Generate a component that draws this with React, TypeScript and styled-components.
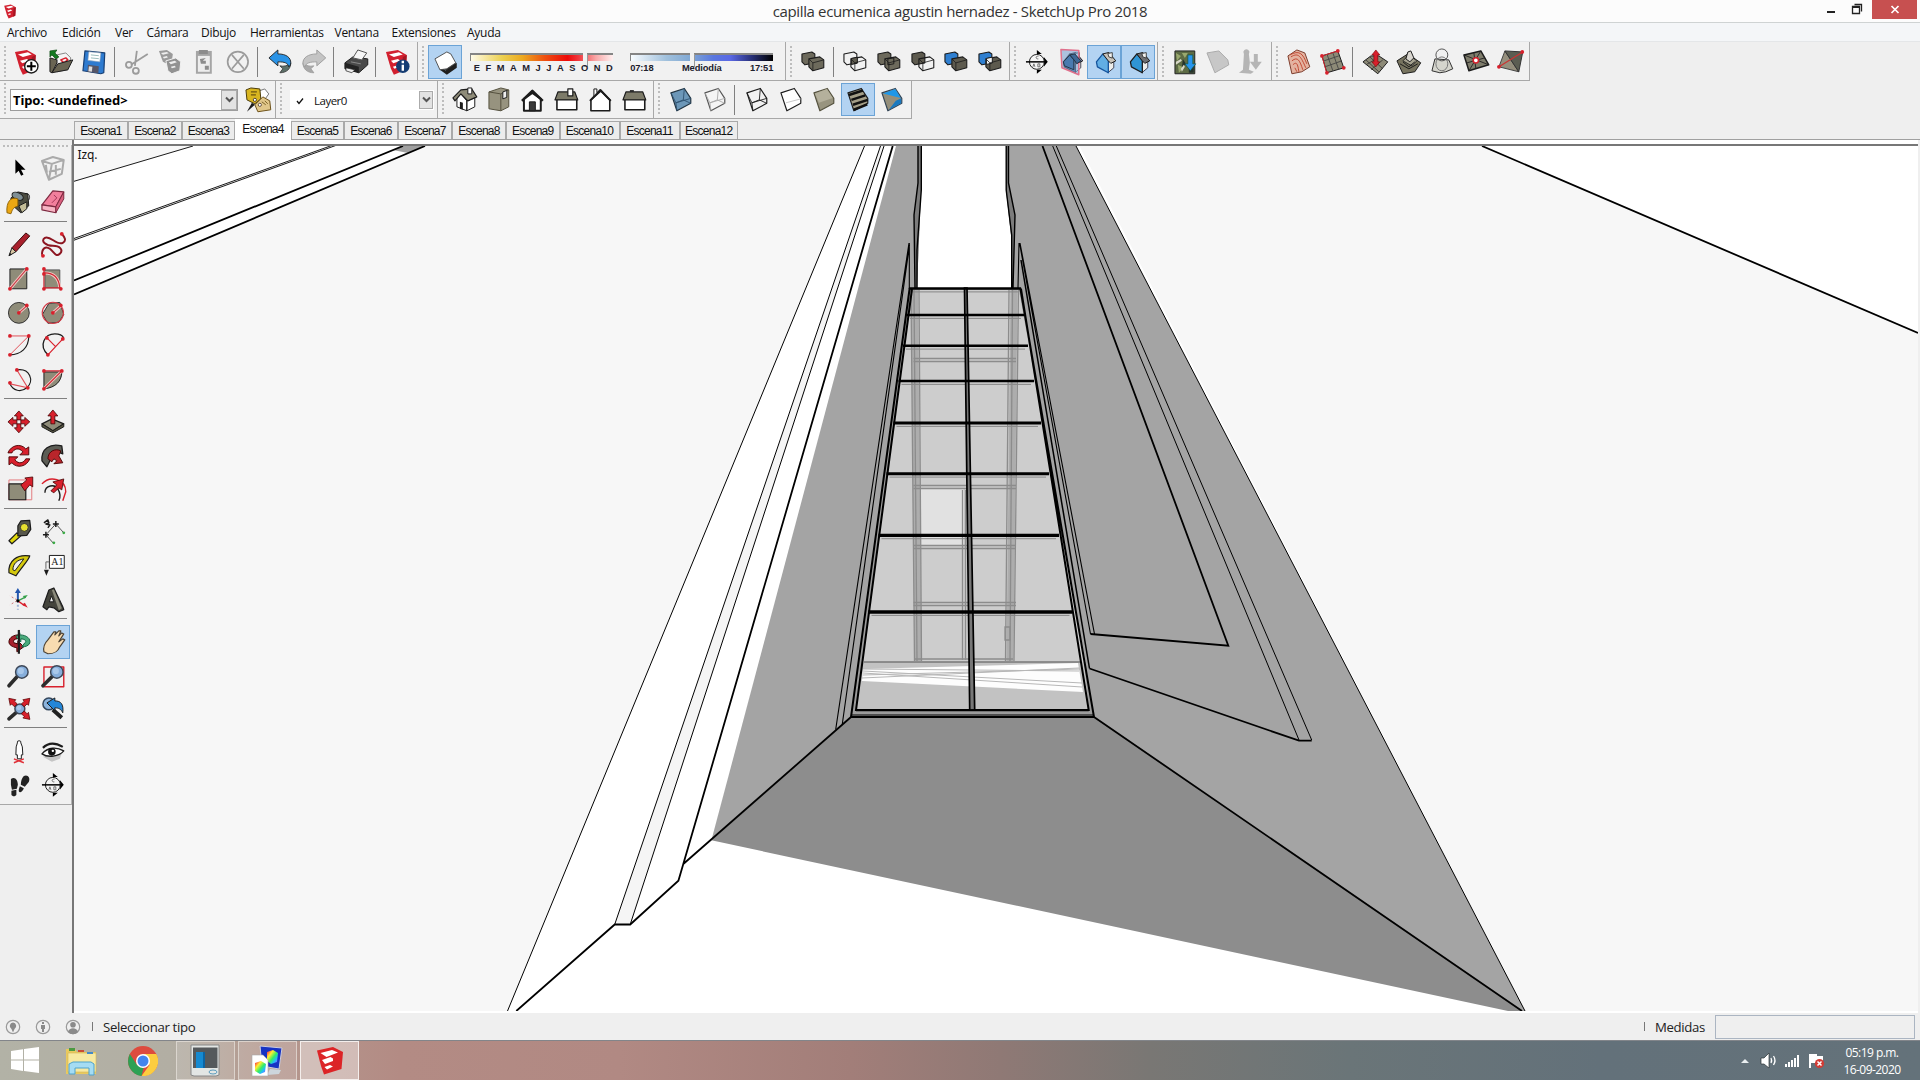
import React, { ReactNode } from 'react';
import styled, { createGlobalStyle } from 'styled-components';

const Global = createGlobalStyle`
  * { box-sizing: border-box; }
  body { margin: 0; background: #f0f0f0; overflow: hidden; }
  svg { display: block; }
`;

const ui = `'Open Sans', 'Noto Sans', sans-serif`;
const CELL = 33.73;

const Window = styled.div`
  width: 1920px;
  height: 1080px;
  display: flex;
  flex-direction: column;
  background: #efefef;
  font-family: ${ui};
  color: #111;
  white-space: nowrap;
`;

/* ---------- title and menu ---------- */
const TitleBar = styled.header`
  height: 23px;
  display: grid;
  grid-template-columns: 160px 1fr 160px;
  background: #fcfcfc;
  border-bottom: 1px solid #cfd3d3;
`;
const AppIcon = styled.div`
  padding: 4px 0 0 3px;
`;
const Title = styled.h1`
  margin: 0;
  text-align: center;
  font: 400 15px/23px ${ui};
  letter-spacing: -0.36px;
  color: #333;
`;
const WindowButtons = styled.div`
  display: flex;
  justify-content: flex-end;
  padding-right: 3px;
`;
const CloseButton = styled.div`
  width: 45px;
  height: 19px;
  background: #c75050;
`;
const MenuBar = styled.nav`
  height: 19px;
  display: flex;
  gap: 14.5px;
  padding-left: 7px;
  background: #f4f6f8;
  border-bottom: 1px solid #e4e6e8;
  font-size: 12px;
  line-height: 19px;
`;
const MenuItem = styled.span<{ $w: number }>`
  width: ${(p) => p.$w}px;
  letter-spacing: -0.27px;
`;

/* ---------- toolbars ---------- */
const ToolbarRow = styled.div<{ $h: number; $top?: number }>`
  display: flex;
  height: ${(p) => p.$h}px;
  --toolbar-top: ${(p) => p.$top || 0}px;
`;
const Toolbar = styled.div<{ $w: number }>`
  width: ${(p) => p.$w}px;
  padding-top: var(--toolbar-top);
  display: flex;
  align-items: center;
  background: #f1f1f1;
  border-right: 1px solid #a8a8a8;
  border-bottom: 1px solid #a8a8a8;
`;
const Grip = styled.div`
  flex: none;
  width: 2px;
  height: 33px;
  margin: 0 4px 0 4px;
  background: repeating-linear-gradient(#bdbdbd 0 2px, transparent 2px 4.2px);
`;
const IconCell = styled.div<{ $on?: boolean }>`
  flex: none;
  width: ${CELL}px;
  height: ${CELL}px;
  background: ${(p) => (p.$on ? '#b3d3f2' : 'transparent')};
  box-shadow: ${(p) => (p.$on ? 'inset 0 0 0 1px #6ba3d6' : 'none')};
`;
const Divider = styled.div`
  flex: none;
  width: 8.43px;
  height: 30px;
  padding-left: 3px;
  &::before {
    content: '';
    display: block;
    width: 1px;
    height: 100%;
    background: #808080;
  }
`;
const Slider = styled.div`
  width: 143px;
  margin-left: 8px;
  padding-top: 5px;
  align-self: stretch;
  & + & { margin-left: 17.5px; }
`;
const Track = styled.div<{ $fill: string }>`
  height: 8px;
  margin-top: 4px;
  border-top: 2px solid #858585;
  border-left: 1px solid #858585;
  background: ${(p) => p.$fill};
`;
const Thumb = styled.div<{ $x: number }>`
  width: 4px;
  height: 13px;
  margin: -2px 0 -11px ${(p) => p.$x}px;
  background: #f1f1f1;
  box-shadow: 1px 1px 0 #999;
`;
const Ticks = styled.div<{ $inset: number; $ls: number }>`
  display: flex;
  justify-content: space-between;
  padding: 0 0 0 ${(p) => p.$inset}px;
  font: 700 9.3px/15px 'Liberation Sans', Arial, sans-serif;
  letter-spacing: ${(p) => p.$ls}px;
  color: #20202c;
`;
const Combo = styled.div<{ $w: number; $h: number; $line: string }>`
  display: flex;
  flex: none;
  width: ${(p) => p.$w}px;
  height: ${(p) => p.$h}px;
  background: #fff;
  border: 1px solid ${(p) => p.$line};
`;
const TypeLabel = styled.span`
  flex: 1;
  padding-left: 2px;
  font: 700 13px/20px 'Noto Sans', sans-serif;
  letter-spacing: -0.08px;
  color: #000;
`;
const LayerLabel = styled.span`
  flex: 1;
  display: flex;
  gap: 10px;
  padding-left: 5px;
  font: 400 11.5px/19px ${ui};
  letter-spacing: -0.5px;
`;
const Drop = styled.div<{ $w: number }>`
  width: ${(p) => p.$w}px;
  background: #e3e3e3;
  border: 1px solid #ababab;
  display: flex;
  align-items: center;
  justify-content: center;
`;
const LayerSlot = styled.div`
  margin-left: 4px;
`;

/* ---------- scene tabs ---------- */
const Tabs = styled.div`
  height: 21px;
  display: flex;
  align-items: flex-end;
  padding-left: 74px;
  border-bottom: 1px solid #a0a0a0;
`;
const Tab = styled.div<{ $w: number; $active?: boolean }>`
  width: ${(p) => p.$w}px;
  height: ${(p) => (p.$active ? 21 : 18)}px;
  margin-bottom: ${(p) => (p.$active ? -1 : 0)}px;
  border: 1px solid ${(p) => (p.$active ? '#fff' : '#a9a9a9')};
  border-bottom: 0;
  background: ${(p) => (p.$active ? '#fff' : '#ececec')};
  text-align: center;
  font: 400 12px/18px 'Liberation Sans', Arial, sans-serif;
  letter-spacing: -0.75px;
`;

/* ---------- body ---------- */
const Body = styled.main`
  height: 873px;
  display: flex;
`;
const Side = styled.aside`
  width: 72px;
  padding-top: 5px;
`;
const SideTools = styled.div`
  width: 72px;
  height: 660px;
  background: #f1f1f1;
  border-right: 1px solid #b4b4b4;
  border-bottom: 1px solid #a8a8a8;
`;
const SideGrip = styled.div`
  height: 2px;
  margin: 0 2px 5.2px 3px;
  background: repeating-linear-gradient(90deg, #bdbdbd 0 2px, transparent 2px 4.2px);
`;
const SideGroup = styled.div`
  display: grid;
  grid-template-columns: ${CELL}px ${CELL}px;
  padding-left: 2.2px;
`;
const SideDivider = styled.div`
  height: 8.6px;
  margin: 0 4px;
  padding-top: 1.4px;
  &::before {
    content: '';
    display: block;
    height: 1px;
    background: #808080;
  }
`;
const Viewport = styled.section`
  flex: 1;
  display: grid;
  border-left: 2px solid #777;
  background: #fff;
  margin-right: 2px;
`;
const Canvas = styled.svg`
  margin-top: 4px;
  border-top: 2px solid #777;
`;

/* ---------- status ---------- */
const StatusBar = styled.footer`
  height: 27px;
  display: flex;
  align-items: center;
  padding: 0 5px 0 5px;
  font-size: 13.2px;
  letter-spacing: -0.33px;
  color: #222;
`;
const StatusIcon = styled.div`
  width: 30px;
`;
const Tick = styled.div`
  width: 1px;
  height: 9px;
  margin-left: -3px;
  background: #777;
`;
const StatusText = styled.span<{ $w: number }>`
  width: ${(p) => p.$w}px;
  margin-left: 10px;
`;
const Spacer = styled.div`
  flex: 1;
`;
const Measure = styled.div`
  width: 200px;
  height: 24px;
  background: #efefef;
  border: 1px solid #abb5c2;
`;

/* ---------- taskbar ---------- */
const Taskbar = styled.footer`
  height: 40px;
  display: flex;
  border-top: 1px solid #82858a;
  background: linear-gradient(90deg, #b2b2a6 0, #b2aea3 170px, #b59a90 260px, #b38b84 400px, #b18983 620px, #a27e79 850px, #8f7975 1000px, #797774 1150px, #6a7578 1350px, #63717a 1600px, #64727a 100%);
`;
const TaskItem = styled.div<{ $w: number; $framed?: boolean; $active?: boolean }>`
  width: ${(p) => p.$w}px;
  height: 39px;
  margin-right: ${(p) => (p.$framed ? 3 : 0)}px;
  display: flex;
  align-items: center;
  justify-content: center;
  background: ${(p) => (p.$active ? 'rgba(255,255,255,.4)' : p.$framed ? 'rgba(255,255,255,.14)' : 'none')};
  border: ${(p) => (p.$active ? '1px solid #f4eeec' : p.$framed ? '1px solid rgba(235,230,225,.65)' : '0')};
`;
const Tray = styled.div`
  display: flex;
  align-items: center;
  padding-right: 18px;
  color: #fff;
`;
const Clock = styled.div`
  width: 60px;
  margin-left: 16px;
  text-align: center;
  font: 400 12px/17px ${ui};
  letter-spacing: -0.55px;
`;

/* ---------- icon drawings, on a 34 unit grid ---------- */
type PProps = React.SVGProps<SVGPathElement>;
const P = ({ f = 'none', s = 'none', w = 1, ...r }: { f?: string; s?: string; w?: number } & PProps) => (
  <path fill={f} stroke={s} strokeWidth={w} strokeLinejoin="round" {...r} />
);
const K = '#1c1c1c';
const OLIVE = '#8f8c79';
const RED = '#d8202c';

const Dots = ({ pts }: { pts: number[][] }) => (
  <>{pts.map(([x, y], i) => <circle key={i} cx={x} cy={y} r="1.9" fill={RED} />)}</>
);
const Logo = () => (
  <>
    <P f="#d2202f" d="M5 7l12-2 9 5-1 15-12 5-3-6z" />
    <P f="#fff" d="M8 9.500l10-2.200 4 2.200-9 2.500z" />
    <P f="#fff" d="M10 16l7-2 2.500 1.800-7 2.500z" />
    <P f="#fff" d="M12 22l4-1.300 1.500 1.800-4 1.500z" />
    <P f="#a51522" d="M22 12l4-2-1 15-4 2z" />
  </>
);
const Cube = ({ fill, edge = K, inner }: { fill: string; edge?: string; inner?: string }) => (
  <>
    <P f={fill} s={edge} w={1.2} d="M7 10L20.500 5.500l6.500 10v5L13 28z" />
    {inner && <P s={inner} w={0.9} d="M20.500 5.500l-1 11.500 7.500 3.500M19.500 17L12 20M13 28l-1-8L7 10M12 20l15-4.500" />}
  </>
);
/* gable front, roof slab and the lit side wall */
const House = ({ wall, roof, line = K }: { wall: string; roof: string; line?: string }) => (
  <>
    <P f="#ededea" s="#334" w={0.9} d="M21 17l6-1v7l-6 5z" />
    <P f={wall} s={line} w={1.3} d="M9.500 17l6.500-8 5.500 6.500V28L10.500 22z" />
    <P f={roof} s={K} d="M16 9l6-1.500 7 8.500-5 2.500-3-3z" />
    <P f="#f2f2f0" s="#333" w={0.9} d="M21 8.500l4.500-.800v5.500L22 12z" />
  </>
);
const Solid = ({ a, b, hole, aEdge = K, bEdge = K }: { a: string; b: string; hole?: string; aEdge?: string; bEdge?: string }) => (
  <>
    <P f={a} s={aEdge} w={1.1} d="M6 9l10-2 3 2v9l-10 2-3-3z" />
    <P f={b} s={bEdge} w={1.1} d="M13 14l11-2 4 3v8l-11 3-4-4z" />
    {hole && <P f={hole} s={K} d="M13.500 13.500l6-1.200v6l-6 1.300z" />}
    <P s={bEdge} w={0.8} d="M13 14l4 4v8M17 18l11-3" />
  </>
);
const Lens = ({ x = 20, y = 13, r = 6.3 }) => (
  <>
    <path d={`M${x - r * 0.7} ${y + r * 0.7}L7 27`} stroke="#2c2c2c" strokeWidth="3.600" strokeLinecap="round" />
    <circle cx={x} cy={y} r={r} fill="#86aedb" stroke="#3e4858" strokeWidth="1.500" />
    <circle cx={x - 1} cy={y - 1} r={r * 0.5} fill="#a9c8ea" />
  </>
);
const arrow = 'M0-11l4.500 5H2v4h-4v-4h-2.500z';

const icons: Record<string, ReactNode> = {
  new: <><Logo /><circle cx="21.500" cy="21.500" r="6.700" fill="#fff" stroke={K} strokeWidth="1.400" /><P s="#000" w={2} d="M21.500 17v9M17 21.500h9" /></>,
  open: <><P f="#f4f4f4" s="#888" d="M13 10l9-2 5 5-3 12-11 2z" /><P s={RED} w={1.5} d="M17 15l5-2 2 2-4 3z" /><P f="#6a6553" s={K} d="M6 13l7 2v3l-5 10-2-1zM8 28l6-9 15-4-5 10z" /><P f="#137a23" s="#0a4a12" w={0.7} d="M6 6l7-1-2 3 4 4-3 2-4-4-2 2z" /></>,
  save: <><P f="#2e7bd0" s="#173f73" w={1.2} d="M8 6l20 2-1 20-3 1-18-3z" /><P f="#fff" s="#9ab" w={0.6} d="M12 6.800l12 1.200-1 9-12-1.500z" /><P s="#9bb" d="M14 10l8 .800M14 13l8 .800" /><P f="#556" d="M11 20l11 1.500-.500 7L10.500 27z" /><P f="#ddd" d="M12 21.500l3.500.500-.500 5-3.500-.500z" /></>,
  cut: <><P s="#9c9c9c" w={1.8} d="M17 6l-2 15M28 9L11 20" /><circle cx="9" cy="20" r="3" fill="none" stroke="#9c9c9c" strokeWidth="1.800" /><circle cx="16" cy="26" r="3" fill="none" stroke="#9c9c9c" strokeWidth="1.800" /></>,
  copy: <><P f="#9a9a9a" d="M6 6l8-1 6 4-1 7-5 3-4-2z" /><P f="#eee" d="M8 8l6-1 2 1.200-6 1.600zM10 12l4-1 1 1.500-4 1z" /><P f="#929292" s="#f1f1f1" d="M13 16l10-3 5 4-1 9-8 3-4-3z" /><P f="#eee" d="M16 17.500l6-1.500 2 1.500-6 2zM18 22l4-1 1 1.500-4 1z" /></>,
  paste: <><P f="#a5a5a5" d="M9 6h16v23H9z" /><P f="#ededed" d="M11 11h12v16H11z" /><P f="#8c8c8c" d="M12 5h9v4h-9zM13 14l6-1-3 3h3v3h-5zM18 21h4v4h-4z" /></>,
  erase: <><circle cx="17" cy="17" r="10.300" fill="none" stroke="#9b9b9b" strokeWidth="1.700" /><P s="#9b9b9b" w={1.7} d="M11 10l12 14M23 10L11 24" /></>,
  undo: <><P f="#5c6f68" s="#333" w={0.8} d="M28 18c0 6-4 10-11 10l3-4-3-3c4 1 8 0 11-3z" /><P f="#2a93e6" s={K} w={0.9} d="M6 13l9-8v4c9 0 13 4 13 9 0 2-1 3-2 4-1-4-4-5-11-5v4z" /></>,
  redo: <><P f="#a9a9a9" s="#999" w={0.8} d="M6 18c0 6 4 10 11 10l-3-4 3-3c-4 1-8 0-11-3z" /><P f="#c4c4c4" s="#999" w={0.9} d="M29 13l-9-8v4C11 9 6 13 6 18c0 2 1 3 2 4 1-4 5-5 12-5v4z" /></>,
  print: <><P f="#4a4a4a" s={K} d="M6 18l8-6 15 2v6l-9 8-14-4z" /><P f="#f6f6f6" s="#555" d="M14 13l5-8 9 3-5 7z" /><P f="#222" d="M6 18l14 4v6L6 24z" /><P f="#eee" s={K} w={0.7} d="M7 23l9 2-3 3-6-2z" /><P s="#8a8a8a" d="M12 17l10 2" /></>,
  info: <><Logo /><circle cx="22" cy="21.500" r="6.800" fill="#163d73" /><P s="#fff" w={2.4} d="M22 20v6M22 16v2.300" /></>,
  shadow: <><P f="#333" d="M17 24l11-6v5l-9 6z" /><P f="#1f1f1f" d="M10 18l8 8 11-8v5l-10 7-7-5z" /><P f="#fff" s="#444" w={0.9} d="M7 14l12-7 4 2 5 9-9 6-7 1z" /></>,
  outer: <Solid a="#6d6a5c" b="#6d6a5c" />,
  intersect: <Solid a="none" b="none" hole="#5f5c50" />,
  union: <><Solid a="#6d6a5c" b="#6d6a5c" /><P s={K} d="M16 14l6-1v6l-6 1z" /></>,
  subtract: <Solid a="#5d5a4e" b="none" />,
  trim: <Solid a="#2f7fd0" b="#5d5a4e" />,
  split: <Solid a="#2f7fd0" b="#5d5a4e" hole="#f1f1f1" />,
  section: <><P f="#000" d="M17 5l5 4h-5zM17 29l5-4h-5zM28 17l-4-5v10z" /><circle cx="17" cy="17" r="7.500" fill="#f5f5f5" stroke="#222" strokeWidth="1" /><P s="#000" w={1.5} d="M6 17h21" /><P s="#666" w={0.9} d="M18.500 11.500c-3-1-3 3 0 2.500M13 22l1-3 1 3M18 19v3h2v-3z" /></>,
  planeShow: <><House wall="#4a87c0" roof="#88a" /><P f="#7fa4d4" fillOpacity={0.6} s="#e0708c" w={1.5} d="M7 4.500l18 1V30L8 23z" /><P f="#4a7aaf" s="#234" d="M9.500 17l6.500-7 4 5v10L10.500 21z" /><P f="#3f6896" s="#234" d="M16 10l5-1 6 7-4 3-2-3z" /></>,
  cutA: <House wall="#62aee4" roof="#c8c3ba" line="#14539c" />,
  cutB: <House wall="#2f95d4" roof="#6f7073" />,
  geo: <><P f="#5d6b45" s="#222" d="M7 6h20v23H7z" /><P f="#99a86e" d="M8 8l5 3-4 5zM14 8h6l-3 5zM10 20l6 3-5 5z" /><P f="#26332c" d="M15 14l3 5-4 4zM21 22h5v6h-5z" /><P f="#d8d8c8" d="M8 17l5-3 1 2-6 4zM13 24l3-4 1 2-3 5z" /><P f="#2795ee" s="#154" w={0.7} d="M20 10h5v9h3l-5.500 7-5.500-7h3z" /></>,
  toggle: <P f="#c7c7c7" s="#aaa" d="M5 8l12-2 9 9 1 5-14 8z" />,
  person: <><P f="#b5b5b5" d="M9 9a3 3 0 1 1 5 0l1 9-1 7 5 2-3 2-12-1 4-3zM19 9h4v8h4l-6 8-6-8h4z" /></>,
  contour: <><P f="#e4b3a0" s="#7c3c2c" d="M6 11l9-6 8 3 5 14-8 5-10 2z" /><P s="#c04a34" d="M9 12c8-5 10 0 15 11M10 16c6-5 8 0 11 9M11 20c4-4 5 0 6 7M13 23l2 4M8 10c9-5 13-2 17 9" /></>,
  scratch: <><P f="#8d8a77" s={K} d="M6 11l16-5 6 17-17 5z" /><P s="#444" w={0.9} d="M11 9l6 17M17 8l6 17M8 16l15-5M9 22l17-6" /><P s={RED} d="M6 11l16-5M6 11l5 18" /><Dots pts={[[6, 11], [22, 6], [28, 23], [11, 28]]} /></>,
  smoove: <><P f="#8d8a77" s={K} d="M5 17l8-6h8l9 6-10 12z" /><P s="#333" w={0.8} d="M8 20l12-7M13 25l12-10M8 15l13 12M12 12l13 12" /><P f={RED} s="#700" w={0.6} d="M18 5l4 5h-2v7h2l-4 5-4-5h2v-7h-2z" /></>,
  stamp: <><P f="#77745f" s={K} d="M5 16l11-7 13 9-6 9-12 2z" /><P f="#a5a28f" s={K} w={0.8} d="M11 16l6-6 8 6-5 5z" /><P f="#d9d6cf" s={K} d="M14 14l2-7 3-1 3 7-4 4z" /><P s={K} d="M8 19l9 5 9-5M11 17l6 5 6-5" /></>,
  drape: <><P f="#d5d5cd" s={K} w={0.9} d="M10 14l14 1 4 9-7 3-6 1-8-2z" /><circle cx="17" cy="10" r="6" fill="none" stroke="#555" /><ellipse cx="17" cy="19" rx="6" ry="7" fill="none" stroke="#777" /></>,
  detail: <><P f="#7e7c6b" s={K} w={1.5} d="M5 10l17-4 8 14-20 6z" /><P s="#222" w={0.9} d="M5 10l25 10M22 6L10 26M8 18l18-5M15 8l2 16" /><circle cx="17" cy="15.500" r="2.700" fill="#fff" stroke={RED} strokeWidth="1.600" /></>,
  flip: <><P f="#958f7d" s="#444" d="M12 6L6 22l20 5z" /><P f="#5b5d52" s="#333" d="M12 6l18 1-4 20z" /><P s="#c93434" w={1.3} d="M6 22L30 7" /><Dots pts={[[6, 22], [29.5, 7]]} /></>,
  tags: <><P f="#fff" s="#777" d="M18 8l6-2 4 5-5 7-6-5z" /><P f="#d8b520" s="#4c3c08" d="M5 7l5-2 9 1 1 10-6 5-8-4z" /><P s="#6c5510" w={1.2} d="M10 9h6M10 12h5" /><P f="#e0c68a" s="#6d5219" d="M14 22l8-8 7 4 1 9-13 2z" /><P s="#7d6428" d="M21 19l4 3M24 18l3 3" /><P f={K} d="M6 29l5-9 3 2z" /><circle cx="14" cy="17" r="1.600" fill="#fff" stroke="#543" /><circle cx="19" cy="22" r="1.600" fill="#fff" stroke="#654" /></>,
  iso: <><P f="#fff" s={K} d="M9 15l4-4 6 7v10l-10-4zM19 18l8-3v9l-8 4z" /><P f="#8f8c79" s={K} w={1.2} d="M5 15l8-8 11-1 5 8-9 4-7-7-6 7z" /><P f="#fff" s={K} d="M20 5h4v6h-4z" /><P f={K} d="M12 19l3 1v7l-3-1z" /></>,
  top: <><P f="#97937f" s="#55513f" d="M7 9l12-4 8 2v17l-8 4-12-2z" /><P s="#55513f" d="M7 9l12 2 8-4M19 11v17" /><P f="#eee" s={K} d="M21 9l4-1.500v7L21 16z" /></>,
  front: <><P f="#fff" s={K} w={2} d="M9 16v12h17V16l-8.500-6z" /><P s={K} w={2.6} d="M7 18l10.500-10L28 18" /><P f="#3a3a3a" s={K} d="M14.500 19h6v9h-6z" /></>,
  right: <><P f="#fff" s={K} w={1.6} d="M8 16h20v11H8z" /><P f="#7d7b69" s={K} w={1.2} d="M9 9h17l3 8H6z" /><P f="#fff" s={K} w={1.2} d="M19 6h5v7h-5z" /></>,
  back: <><P f="#fff" s={K} w={1.6} d="M8 17v11h19V17l-9-9z" /><P s={K} w={2} d="M7 18l10.500-11L28 18" /><P f="#fff" s={K} d="M11 6h3v4l-3 3z" /></>,
  left: <><P f="#fff" s={K} w={1.6} d="M8 16h20v11H8z" /><P f="#7d7b69" s={K} w={1.2} d="M9 9h17l3 8H6z" /><P s={K} w={1.6} d="M13 8h4" /></>,
  xray: <Cube fill="#6c97b8" edge="#213442" inner="#2f5270" />,
  backEdges: <Cube fill="#f5f5f5" edge="#555" inner="#aaa" />,
  wire: <Cube fill="none" inner={K} />,
  hidden: <><Cube fill="#fff" /><P s="#bbb" w={0.8} d="M12 20l15-4" /></>,
  shaded: <><Cube fill="#98947f" edge="#55523f" /><P f="#b4b09c" d="M8 10.500l12-4.500 6 9-14 5z" /></>,
  texture: <><Cube fill="#a39e88" /><P s="#111" w={2.6} d="M8 12l14-4.500M10.500 17l14-4.500M12 22l15-5M13 27l13.500-5.500" /></>,
  mono: <><Cube fill="#958f7b" edge="#345" /><P f="#1f97e8" d="M8 10.500l12.500-4.500 5.500 9z" /><P f="#1979bf" d="M26.500 15.500v5L14 27l7-9z" /></>,
  select: <P f="#000" d="M14.500 7.500v14.500l3.300-3 2.500 5 2.400-1.200-2.500-5h4.500z" transform="translate(-1 0)" />,
  component: <><P s="#aaa" w={2} d="M6 9l11-4 11 3-2 14-13 6zM6 9l10 3 12-4M16 12l-3 16M10 13l1 8M20 13v10M13 20l12-3" /></>,
  paint: <><P f="#4b4c40" s={K} d="M9 12l7-6 10 2 1 12-8 7-9-8z" /><ellipse cx="15.500" cy="10.500" rx="6" ry="3.500" fill="#7f8f95" stroke={K} transform="rotate(25 16 11)" /><P f="#c3bd98" s={K} d="M17 20l8-4v7l-5 4z" /><P s={K} w={0.9} d="M23 8c4-2 6 3 4 6" /><P f="#eba713" s="#8a5d00" w={0.9} d="M16 13c-7-3-12 3-11 14l4 1c2-6 3-6 7-8z" /></>,
  eraser: <><P f="#f27f9c" s="#7d2940" w={1.2} d="M6 19L17 5l11 1-8 15z" /><P f="#f7b5c4" s="#7d2940" w={1.2} d="M6 19l14 2v6L6 24z" /><P f="#d9607f" s="#7d2940" d="M28 6v7l-8 14v-6z" /><P s="#a23456" d="M18 9l3 3-5 5" /></>,
  line: <><P f="#a8202c" s="#3d0b0b" d="M10 20L24 5l4 3-14 16z" /><P f="#d8c6a4" s={K} d="M10 20l4 4-7 4z" /><P f={K} d="M7 28l1-3 2 2z" /></>,
  free: <><P s="#8c1520" w={2} d="M26 6c3 3 5 7 1 9-6 3-13-8-18-5s1 8 8 8 11 4 7 8-6-2-10-5-8-1-8 6" /><Dots pts={[[26, 6], [7, 28]]} /></>,
  rect: <><P f={OLIVE} s="#222" d="M8 7h17v20H8z" /><P s="#f7c9c6" w={3} d="M8 27L25 7" /><P s="#c4424a" w={1.2} d="M8 27L25 7" /><Dots pts={[[8, 27], [25, 7]]} /></>,
  rotRect: <><P f={OLIVE} s="#555" d="M9 8h15v18H9z" /><P s="#f7c9c6" w={3} d="M9 11c9 0 14 5 15 15" /><P s="#d02a34" w={1.2} d="M8 6v20h17M9 11c9 0 14 5 15 15" /><Dots pts={[[8, 7], [8, 12], [8, 27], [25, 27]]} /></>,
  circle: <><circle cx="17" cy="17" r="10.500" fill={OLIVE} stroke="#333" /><P s="#f7c9c6" w={3} d="M17 17l8-7" /><P s="#c4424a" w={1.2} d="M17 17l8-7" /><Dots pts={[[17, 17], [25, 9.5]]} /></>,
  polygon: <><P f={OLIVE} s="#333" d="M13 7.500l11-1 4 12-5 8-11 1-5.500-9z" /><circle cx="17" cy="17" r="10.700" fill="none" stroke="#d23c46" strokeWidth="1.200" /><P s="#f7c9c6" w={3} d="M17 17l8-7" /><P s="#c4424a" w={1.2} d="M17 17l8-7" /><Dots pts={[[17, 17], [25, 9.5]]} /></>,
  arc: <><P s={K} w={1.2} d="M27 7c0 12-8 19-19 19" /><P s="#e05058" d="M8 7h19L8 26" /><Dots pts={[[8, 7], [27, 7], [8, 26]]} /></>,
  arc2: <><P s={K} w={1.3} d="M12 26C2 16 9 5 19 5c5 0 8 2 9 4" /><P s={RED} w={1.2} d="M12 26L28 9M11 9l9 9" /><Dots pts={[[12, 26], [27, 10], [11, 9]]} /></>,
  arc3: <><P s={K} w={1.2} d="M15 7c13-2 18 11 10 18-6 5-14 3-17-4" /><P s="#e05058" w={1.2} d="M15 7l11 18-18-4" /><Dots pts={[[15, 7], [26, 25], [8, 20]]} /></>,
  pie: <><P f={OLIVE} s={K} d="M8 9h18c0 9-6 16-18 17z" /><P s="#f7c9c6" w={3} d="M8 26L26 8" /><P s="#d02a34" w={1.2} d="M8 8h18L8 26" /><Dots pts={[[8, 8], [26, 8], [8, 26]]} /></>,
  move: <g fill={RED} stroke="#400" strokeWidth=".800">{[0, 90, 180, 270].map((a) => <path key={a} d={arrow} transform={`translate(17 17) rotate(${a})`} />)}</g>,
  push: <><P f={OLIVE} s={K} w={1.2} d="M6 19l10-5 12 5-11 7z" /><P f="#55533f" s={K} d="M6 19l11 7 11-7v3l-11 6-11-6z" /><P f={RED} s="#400" w={0.8} d="M17 5l5 6h-3v8h-4v-8h-3z" /></>,
  rotate: <><P f={RED} s="#400" w={0.9} d="M6 14c3-8 13-10 18-4l3-2v8l-9 0 3-3c-4-5-9-3-11 1zM28 20c-3 8-13 10-18 4l-3 2v-8l9 0-3 3c4 5 9 3 11-1z" /></>,
  follow: <><P f="#5c5d55" s={K} w={1.3} d="M6 22C5 10 14 4 26 7l1 8-5-2c-6-1-8 3-8 9l-3 6z" /><P f="#b9252b" s="#400" w={0.9} d="M12 20c0-8 8-11 13-8l-2 5 4 7-9 1 3-3-3-2-2 3z" /></>,
  scale: <><P s="#e37b80" d="M7 7h23v20H7z" /><P f={OLIVE} s={K} w={1.2} d="M7 11h17v16H7z" /><P f={RED} s="#400" w={0.8} d="M19 12l6-5-2-2 8-1v10l-3-2-5 6z" /></>,
  offset: <><P s={K} w={1.4} d="M9 20c0-8 10-9 13-4s3 8 1 12" /><P s={RED} w={1.4} d="M6 11c8-9 24-5 24 8l-3 9" /><P f={RED} s="#400" w={0.8} d="M15 18l6-6-4-3 11-3-2 11-3-2-5 5z" /></>,
  tape: <><P f="#e0d80a" s={K} w={1.2} d="M15 18l4 3-9 8-3-3z" /><P f="#57574c" s={K} w={1.2} d="M16 11l3-5 9-.500 1 9-4 6-9 .500z" /><circle cx="22.500" cy="12.500" r="4" fill="#e7e030" stroke="#333" /></>,
  dim: <><P s="#555" d="M10 20L20 9M10 20l8 9M20 9l8 9" /><P s={K} w={1.5} d="M7 20h6M10 17v6M17 9h6M20 6v6M8 8l4-3 1 3-3 1 4 1-2 3" /><circle cx="18" cy="28" r="1.400" fill="#3aaa45" /><circle cx="28" cy="18" r="1.400" fill="#3aaa45" /></>,
  protractor: <><P f="#d5c90d" s={K} w={1.2} d="M7 24c-1-12 8-19 21-17-1 4-6 9-14 20z" /><P f="#f1f1f1" s={K} d="M11 21c0-6 4-10 11-11-3 4-6 8-9 12z" /></>,
  text: <><P f="#fff" s={K} d="M13.500 6.500h15v13h-15z" /><text x="15.500" y="16.500" fontFamily="Liberation Serif, serif" fontSize="10" fill="#222">A1</text><P s="#666" d="M13 13h-3v7" /><P f={K} d="M8 21h5l-2.500 6z" /></>,
  axes: <><P s="#2357ae" w={2} d="M16 17V8" /><P s="#2357ae" w={2} strokeDasharray="2 2" opacity={0.4} d="M16 18v9" /><P f="#2357ae" d="M13 10l3-5 3 5z" /><P s="#35a04a" w={1.3} d="M16 18l8-4" /><P f="#35a04a" d="M21 13l5-1-3 4z" /><P s={RED} w={1.3} d="M16 18l7 5" /><P f={RED} d="M20 22l6 3-3-5z" /><P s="#c77" strokeDasharray="2 2" d="M15 17l-7-4M15 18l-7 4" /><circle cx="16" cy="18" r="1.600" /></>,
  text3d: <><P f="#45453d" s={K} w={1.2} d="M7 24l6-17 5-2 9 19 1 3-5 2-5-4-5-1-2 3z" /><P f="#8c8b7c" d="M16 7l2-.500 8 19-3 2z" /><P f="#f1f1f1" s={K} d="M13.500 19l2-6 2.500 6z" /></>,
  orbit: <><P f="#a6202c" s="#400" d="M7 17c0-5 6-7 9-7l-1 4c-3 0-4 2-3 4l4 1v-3l6 6-7 5v-4c-5-1-8-3-8-6z" /><P f="#4bab7c" s="#164" d="M18 10c7 0 11 4 10 8-1 3-4 4-8 4l3-4c2-1 1-4-4-4v3l-5-5 4-4z" /><P s={K} w={2.2} d="M17 5v24" /></>,
  pan: <P f="#f8dcb1" s="#4d4335" w={1.2} d="M8 27c-1-5 0-8 4-12l6-8 2 0-1 3 4-4 2 0-2 5 3-3 2 1-5 8 4-3 2 1-5 7c-2 5-5 7-12 7z" />,
  zoom: <Lens />,
  zoomWin: <><P s={RED} w={1.4} d="M8 8h20v20H8z" /><Lens x={21} /></>,
  zoomExt: <><Lens x={18} y={17} r={5} /><g fill={RED} stroke="#500" strokeWidth=".700">{[-45, 45, 135].map((a) => <path key={a} d="M0-15l4 6H2v4h-4v-4h-2z" transform={`translate(17.500 17) rotate(${a})`} />)}</g></>,
  previous: <><circle cx="13" cy="12" r="6" fill="#8cb4dd" stroke="#35485e" strokeWidth="1.500" /><P s="#222" w={4} d="M17 18l9 8" /><P f="#2386d8" s={K} d="M11 11l8-5v3c6 0 9 3 8 12-2-4-4-5-8-5v3z" /></>,
  camera: <><P f="#fff" s={K} d="M15.500 8a1.800 1.800 0 1 1 3.500 0l1.500 4 .500 8h-1.500v4h-4v-4H14l.300-8z" /><P s="#e03038" w={1.4} d="M12 24l10 4M22 24l-10 4" /></>,
  look: <><P f="#999" opacity={0.5} d="M7 22l20-6-3 8-8 3z" /><P s={K} w={2.2} d="M7 13c6-6 13-5 20-1" /><P f="#fff" s={K} w={1.3} d="M6 19c6-7 15-7 22-3-5 6-16 7-22 3z" /><circle cx="16" cy="17" r="3.800" fill="#111" /><circle cx="17" cy="16" r="1.200" fill="#fff" /></>,
  walk: <><P f="#222" d="M9 11c4-3 7 1 7 6l-1 4-5 1-1-5zM9.500 23l5-1v5c-1 2-4 2-5 0zM22 8c4-2 7 2 5 6l-4 5-4-2c0-4 1-7 3-9zM18 18.500l4 2c-1 4-6 6-5 1z" /></>,
};

const Icon = ({ name, on }: { name: string; on?: boolean }) => (
  <IconCell $on={on}>
    <svg width="100%" height="100%" viewBox="0 0 34 34">{icons[name]}</svg>
  </IconCell>
);
/* "|" is a divider, a trailing "*" marks a pressed button */
const Icons = ({ list }: { list: string }) => (
  <>
    {list.split(' ').map((n, i) =>
      n === '|' ? <Divider key={i} /> : <Icon key={n} name={n.replace('*', '')} on={n.endsWith('*')} />
    )}
  </>
);
const Chevron = () => (
  <svg width="9" height="7" viewBox="0 0 9 7"><path d="M1 1.500l3.500 3.500L8 1.500" fill="none" stroke="#555" strokeWidth="2" /></svg>
);

const menu: [string, number][] = [['Archivo', 40.5], ['Edición', 38.5], ['Ver', 17], ['Cámara', 40], ['Dibujo', 34.5], ['Herramientas', 70], ['Ventana', 42.5], ['Extensiones', 61], ['Ayuda', 35]];
const tabWidths = [54, 54, 53, 56, 53, 54, 54, 54, 53.5, 60, 60, 58.5];
const sideGroups = [
  ['select', 'component', 'paint', 'eraser'],
  ['line', 'free', 'rect', 'rotRect', 'circle', 'polygon', 'arc', 'arc2', 'arc3', 'pie'],
  ['move', 'push', 'rotate', 'follow', 'scale', 'offset'],
  ['tape', 'dim', 'protractor', 'text', 'axes', 'text3d'],
  ['orbit', 'pan*', 'zoom', 'zoomWin', 'zoomExt', 'previous'],
  ['camera', 'look', 'walk', 'section'],
];

/* ---------- the modelled chapel ---------- */
const rails = [
  [909, 1021, 288.5, 2.4], [907, 1024, 315, 2.4], [903, 1028, 345.7, 2.5], [898.5, 1034, 381, 2.6],
  [893.5, 1041, 423, 2.8], [886.5, 1049, 473.7, 3], [878.5, 1059, 535.3, 3.2], [868.5, 1072.5, 612, 3.4], [856, 1088.7, 710.3, 2],
];
const Model = () => (
  <Canvas width="1844" height="867" viewBox="74 146 1844 865" preserveAspectRatio="none">
    <path fill="#f7f7f7" d="M74 146h1844v865H74z" />
    <path fill="#fff" d="M74 181.300L193 146H425L74 294.500z" />
    <path fill="#a0a0a0" d="M393 150l10-4h22l-17 7z" />
    <path fill="#fff" d="M1482 146h436v187z" />
    <path fill="#fff" d="M864.500 146h215L1525 1011H507.500z" />
    <path fill="#f5f5f5" d="M880.500 146h3.500L630.200 924.500h-15.500z" />
    <path fill="#a4a4a4" d="M896 146h25v44l-4 98-66 429-139.600 123.300z" />
    <path fill="#a4a4a4" d="M1006 146h70l449 865h-3L1094 717 1011 288V235l-5-45z" />
    <path fill="#8d8d8d" d="M850.600 717H1094l428 294h-14L711.400 840.300z" />
    <path fill="#9c9c9c" d="M909.700 288h110.600L1094 717H851z" />
    <path fill="#cdcdcd" d="M912 290h107l66.500 372H862z" />
    <path fill="#c2c2c2" d="M863 662h221l5 48H856z" />
    <path fill="#e1e1e1" d="M920.500 489H964v56h-43.500z" />
    <path fill="#fdfdfd" d="M863 669l215-6 5 29-221-11z" />
    <g fill="none" stroke="#777" strokeWidth="1">
      <path d="M864 662h216" strokeWidth="1.500" />
      <path stroke="#b7b7b7" d="M863 671l219 12M863 675l218-6M862 678l217-10M863 673l219 14M863 669l216 2" />
    </g>
    <g fill="none" stroke="#8c8c8c" strokeWidth="1.300">
      <path stroke="#adadad" strokeWidth="7" d="M914.500 290l3.500 371M1014 290l-4 371" />
      <path d="M911 290l3.500 371M914 290l3 371M919 290l2.500 371M1018.500 290L1014 661M1012.500 290l-2.500 371M1009 290l-3.500 371" />
      {[360, 487, 547, 604].map((y) => <path key={y} d={`M913.500 ${y - 1.5}H1016M913.500 ${y + 1.5}H1016`} />)}
      <path d="M914 659h99M962.500 490v170M965.500 490v170M1005 627h5v13h-5z" />
    </g>
    <g fill="none" stroke="#888" strokeWidth="1">
      {rails.slice(0, 8).map(([a, b, y]) => <path key={y} d={`M${a + 3} ${y + 3.4}H${b - 3}`} />)}
    </g>
    <path fill="#7c7c7c" d="M918 146h3v44l-4 98h-2l-1-73 4-32zM1006 146h2.500v37l6.500 32-2 73h-2v-53l-5-45z" />
    <g fill="none" stroke="#000" strokeWidth="1">
      <path d="M74 181.300L193 146M74 238.500L333 145M74 240.200L337 145" strokeWidth=".9" />
      <path d="M74 280.500L403 146M74 294.500L425 146M1482 146l436 187" strokeWidth="1.800" />
      <path d="M864.500 146l-357 865M880.500 146L614.700 924.500M884 146L630.200 924.500" />
      <path d="M892.700 146L683.300 864l-4.900 16.700-48.200 43.800h-15.500L516.300 1011M683.300 864l167.700-147" strokeWidth="1.800" />
      <path d="M909 243L835.700 729.500M909.500 245L842.300 724M909.300 243v46M1020 243l74.500 391M1019.500 243l71 391M1019 243l-1 45" strokeWidth="1.100" />
      <path d="M918 146v37l-4 32 1 73M921.300 146v44l-4.300 60v38M1008.500 146v37l6.500 32-2 73M1006.200 146v44l5.500 45v53" strokeWidth="1.400" />
      <path d="M909.700 288L851 717H1094L1020.300 288M912 289l-56 421h232.700L1021 289" strokeWidth="2" />
      <path d="M1021 260l68.500 408.500" strokeWidth="1.500" />
      <path d="M852 715h242" />
      <path d="M1076 146l449 865M1052.700 146L1299 740M1056.300 146l255.400 594" />
      <path d="M1042.500 146l185.800 499.700L1090.500 634M1089.500 668.500L1299 740.700h12.700M1094 717l428 294" strokeWidth="1.800" />
    </g>
    <path fill="#777" stroke="#000" strokeWidth="1.700" d="M964.500 288h2.500l7.700 422h-5z" />
    {rails.map(([a, b, y, w]) => <path key={y} d={`M${a} ${y}H${b}`} stroke="#000" strokeWidth={w} />)}
    <text x="77.500" y="158.500" fontFamily="Noto Sans, sans-serif" fontSize="12" fill="#111" textLength="20">Izq.</text>
  </Canvas>
);

export default function App() {
  return (
    <Window>
      <Global />
      <TitleBar>
        <AppIcon><svg width="14" height="15" viewBox="4 4 23 27"><Logo /></svg></AppIcon>
        <Title>capilla ecumenica agustin hernadez - SketchUp Pro 2018</Title>
        <WindowButtons>
          <svg width="45" height="20" viewBox="0 0 45 20"><path d="M0 12h8" stroke="#222" strokeWidth="2" /><path d="M25.500 6.500h7v7h-7zM27.500 4.500h7v7" stroke="#222" fill="none" strokeWidth="1.300" /><path d="M25 7h8" stroke="#222" strokeWidth="2" /></svg>
          <CloseButton><svg width="45" height="19" viewBox="0 0 45 19"><path d="M19.500 6l7 7M26.500 6l-7 7" stroke="#fff" strokeWidth="1.700" /></svg></CloseButton>
        </WindowButtons>
      </TitleBar>
      <MenuBar>{menu.map(([t, w]) => <MenuItem key={t} $w={w}>{t}</MenuItem>)}</MenuBar>

      <ToolbarRow $h={39} $top={2}>
        <Toolbar $w={418}><Grip /><Icons list="new open save | cut copy paste erase | undo redo | print | info" /></Toolbar>
        <Toolbar $w={368}>
          <Grip />
          <Icon name="shadow" on />
          <Slider>
            <Track $fill="linear-gradient(90deg,#fffbe8,#ecd050 22%,#ecaa20 36%,#ee5010 52%,#ee0a0a 68%,#f03a40 76%,#f8a8a8 88%,#fff0f0)"><Thumb $x={112} /></Track>
            <Ticks $inset={4} $ls={0}>{'EFMAMJJASOND'.split('').map((c, i) => <span key={i}>{c}</span>)}</Ticks>
          </Slider>
          <Slider>
            <Track $fill="linear-gradient(90deg,#f8fcff,#a0c0dc 25%,#80a8d4 42%,#5a78e0 58%,#5a68e4 70%,#283078 85%,#000)"><Thumb $x={59} /></Track>
            <Ticks $inset={0} $ls={-0.1}><span>07:18</span><span>Mediodía</span><span>17:51</span></Ticks>
          </Slider>
        </Toolbar>
        <Toolbar $w={224}><Grip /><Icons list="outer | intersect union subtract trim split" /></Toolbar>
        <Toolbar $w={148}><Grip /><Icons list="section planeShow cutA* cutB*" /></Toolbar>
        <Toolbar $w={114}><Grip /><Icons list="geo toggle person" /></Toolbar>
        <Toolbar $w={257.5}><Grip /><Icons list="contour scratch | smoove stamp drape detail flip" /></Toolbar>
      </ToolbarRow>

      <ToolbarRow $h={38}>
        <Toolbar $w={276}>
          <Grip />
          <Combo $w={228} $h={22} $line="#9c9c9c"><TypeLabel>Tipo: &lt;undefined&gt;</TypeLabel><Drop $w={16}><Chevron /></Drop></Combo>
          <Spacer /><Icon name="tags" />
        </Toolbar>
        <Toolbar $w={162}>
          <Grip />
          <LayerSlot>
            <Combo $w={144} $h={20} $line="#fff"><LayerLabel><svg width="8" height="18" viewBox="0 0 8 18"><path d="M1 10l2 2.500 4-5" fill="none" stroke="#111" strokeWidth="1.300" /></svg>Layer0</LayerLabel><Drop $w={14}><Chevron /></Drop></Combo>
          </LayerSlot>
        </Toolbar>
        <Toolbar $w={216}><Grip /><Icons list="iso top front right back left" /></Toolbar>
        <Toolbar $w={258}><Grip /><Icons list="xray backEdges | wire hidden shaded texture* mono" /></Toolbar>
      </ToolbarRow>

      <Tabs>{tabWidths.map((w, i) => <Tab key={i} $w={w} $active={i === 3}>{`Escena${i + 1}`}</Tab>)}</Tabs>

      <Body>
        <Side>
          <SideTools>
            <SideGrip />
            {sideGroups.map((g, i) => (
              <React.Fragment key={i}>
                {i > 0 && <SideDivider />}
                <SideGroup><Icons list={g.join(' ')} /></SideGroup>
              </React.Fragment>
            ))}
          </SideTools>
        </Side>
        <Viewport><Model /></Viewport>
      </Body>

      <StatusBar>
        {['M8 3.500a3.500 3.500 0 0 1 1.500 6.500L8 13.500 6.500 10A3.500 3.500 0 0 1 8 3.500z', 'M7 3h2v2H7zM6 6h4v4H9v3H7v-3H6z', 'M8 3a2.800 2.800 0 1 1 0 5.600A2.800 2.800 0 1 1 8 3zM3 13c1-5 9-5 10 0-3 3-7 3-10 0z'].map((d) => (
          <StatusIcon key={d}><svg width="16" height="16" viewBox="0 0 16 16"><circle cx="8" cy="8" r="6.700" fill="none" stroke="#9a9a9a" strokeWidth="1.200" /><path d={d} fill="#8a8a8a" /></svg></StatusIcon>
        ))}
        <Tick />
        <StatusText $w={110}>Seleccionar tipo</StatusText>
        <Spacer />
        <Tick />
        <StatusText $w={60}>Medidas</StatusText>
        <Measure />
      </StatusBar>

      <Taskbar>
        <TaskItem $w={50}><svg width="28" height="27" viewBox="0 0 28 27"><path fill="#fff" d="M0 4l12-1.800v10.300H0zM13 2l15-2v12.500H13zM0 13.500h12V24L0 22zM13 13.500h15V26l-15-2z" /></svg></TaskItem>
        <TaskItem $w={62}><svg width="33" height="30" viewBox="0 0 33 30"><path fill="#e9c95e" d="M1 3h9l2 3h19v22H1z" /><path fill="#f7e9a2" stroke="#d4b659" strokeWidth=".600" d="M3 7h28v19H3z" /><path fill="#4c9a42" d="M4 2h6v3H4z" /><path fill="#c94c36" d="M13 4h6v2h-6z" /><path fill="#4289c9" d="M22 6h6v2h-6z" /><path fill="#a5dcf3" stroke="#4fa3cc" d="M4 28V18l4-2h18l3 2v11h-5v-7H10v6z" /></svg></TaskItem>
        <TaskItem $w={61.5}><svg width="30" height="30" viewBox="0 0 30 30"><circle cx="15" cy="15" r="15" fill="#dd4b3e" /><path fill="#fccd3f" d="M15 8h13.300A15 15 0 0 1 13.500 30l8-11z" /><path fill="#2da154" d="M1.800 8l7.200 11 6.500 3-2 8A15 15 0 0 1 1.800 8z" /><circle cx="15" cy="15" r="7" fill="#fff" /><circle cx="15" cy="15" r="5.500" fill="#4384ee" /></svg></TaskItem>
        <TaskItem $w={2} />
        <TaskItem $w={59} $framed><svg width="30" height="33" viewBox="0 0 30 33"><path fill="#e3e6e4" stroke="#888" d="M1 1h28v30l-3 1H4l-3-1z" /><path fill="#55595c" d="M3 3.500h24.500V24H3z" /><path fill="#168ad1" d="M6 8h7v16H6z" /><path fill="#0c65a4" d="M13 8h2v16h-2z" /><ellipse cx="23" cy="28" rx="4" ry="2" fill="none" stroke="#5c9cbd" /></svg></TaskItem>
        <TaskItem $w={59.5} $framed>
          <svg width="32" height="32" viewBox="0 0 32 32">
            <defs><linearGradient id="hue" x1="0" x2="1" y2="1"><stop stopColor="#f04" /><stop offset=".3" stopColor="#fe3" /><stop offset=".55" stopColor="#3e6" /><stop offset=".75" stopColor="#2bf" /><stop offset="1" stopColor="#b3f" /></linearGradient></defs>
            <path fill="#1733c3" stroke="#ccd" d="M9 1l22 2-3 21-17-3z" /><path fill="url(#hue)" d="M16 7l6-2 5 3-1 9-6 2-4-3z" /><path fill="#cdd6dc" d="M19 24l11 1-2 4-12 1z" /><path fill="#fff" stroke="#aaa" strokeWidth=".600" d="M1 10h11l5 5v16H1z" /><path fill="url(#hue)" d="M4 18l6-2 5 3-1 8-5 2-5-3z" />
          </svg>
        </TaskItem>
        <TaskItem $w={59} $framed $active><svg width="28" height="29" viewBox="0 0 28 29"><path fill="#dc2427" d="M1 4.500L17 1l10 5-1.500 17L8 28.500 5 20z" /><path fill="#fff" d="M4.500 7l11.500-3 6 2.500L10.500 11zM6 14l8.500-3 2.500 1.500V15l-8 3zM8.500 21l5.500-2 3 1.500-6 3z" /></svg></TaskItem>
        <Spacer />
        <Tray>
          <svg width="86" height="20" viewBox="0 0 86 20">
            <path fill="#e9eef0" d="M1 12l4-4 4 4z" />
            <path fill="#fff" stroke="#2c3336" strokeWidth=".700" d="M21 7h3l5-5v15l-5-4h-3z" /><path fill="none" stroke="#fff" strokeWidth="1.300" d="M31 7c1 2 1 3 0 5M33.500 5c2 3 2 6 0 9" />
            <path fill="#fff" d="M45 13h2v3h-2zM48 11h2v5h-2zM51 9h2v7h-2zM54 7h2v9h-2zM57 4h2v12h-2z" />
            <path fill="#fff" d="M69 3h2v14h-2zM71 3h6v2h6v7H71z" /><circle cx="79.500" cy="12.500" r="4.600" fill="#d33b34" /><path d="M77.500 10.500l4 4M81.500 10.500l-4 4" stroke="#fff" strokeWidth="1.500" />
          </svg>
          <Clock>05:19 p.m.<br />16-09-2020</Clock>
        </Tray>
      </Taskbar>
    </Window>
  );
}
